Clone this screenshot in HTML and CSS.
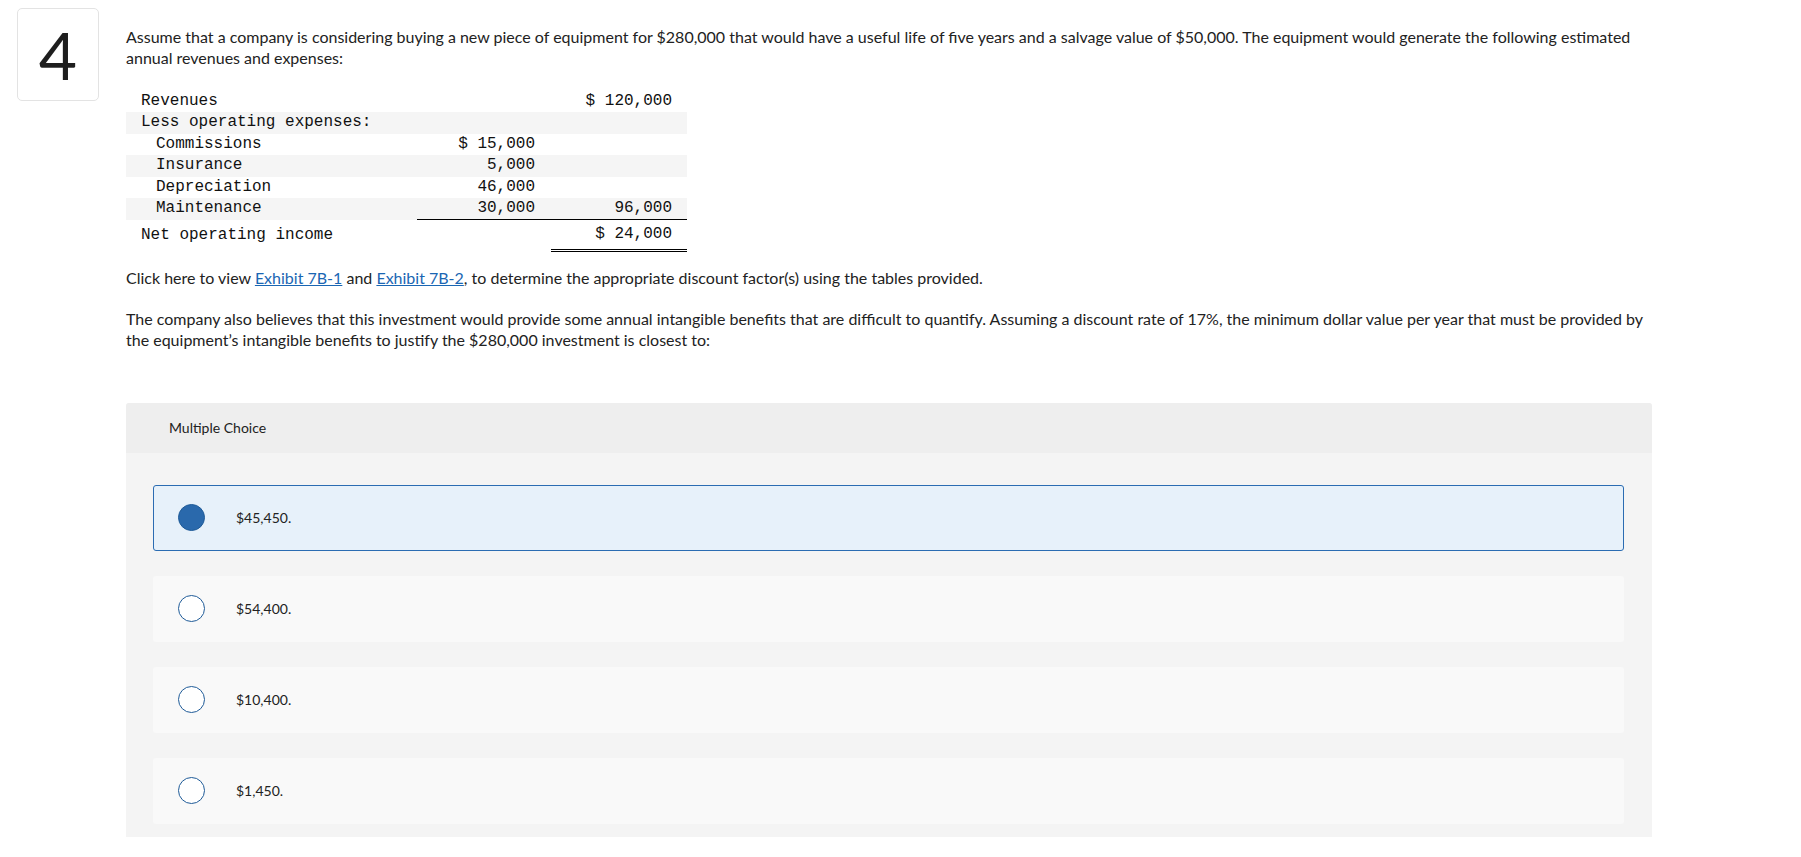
FILE: index.html
```html
<!DOCTYPE html>
<html lang="en">
<head>
<meta charset="utf-8">
<title>Question 4</title>
<link rel="stylesheet" href="styles.css">
</head>
<body>
<div class="question">
  <div class="qnum">4</div>
  <div class="qbody">
    <p class="para first">Assume that a company is considering buying a new piece of equipment for $280,000 that would have a useful life of five years and a salvage value of $50,000. The equipment would generate the following estimated annual revenues and expenses:</p>
    <table class="fin">
      <colgroup><col class="c1"><col class="c2"><col class="c3"></colgroup>
      <tr><td>Revenues</td><td></td><td class="num">$ 120,000</td></tr>
      <tr class="alt"><td>Less operating expenses:</td><td></td><td></td></tr>
      <tr><td class="ind">Commissions</td><td class="num n2">$ 15,000</td><td></td></tr>
      <tr class="alt"><td class="ind">Insurance</td><td class="num n2">5,000</td><td></td></tr>
      <tr><td class="ind">Depreciation</td><td class="num n2">46,000</td><td></td></tr>
      <tr class="alt"><td class="ind">Maintenance</td><td class="num n2 single">30,000</td><td class="num single">96,000</td></tr>
      <tr class="total"><td>Net operating income</td><td></td><td class="num dbl">$ 24,000</td></tr>
    </table>
    <p class="para click">Click here to view <a href="#">Exhibit 7B-1</a> and <a href="#">Exhibit 7B-2</a>, to determine the appropriate discount factor(s) using the tables provided.</p>
    <p class="para">The company also believes that this investment would provide some annual intangible benefits that are difficult to quantify. Assuming a discount rate of 17%, the minimum dollar value per year that must be provided by the equipment’s intangible benefits to justify the $280,000 investment is closest to:</p>
    <div class="mc">
      <div class="mc-head">Multiple Choice</div>
      <div class="mc-list">
        <div class="opt selected"><span class="radio"></span><span class="otext">$45,450.</span></div>
        <div class="opt"><span class="radio"></span><span class="otext">$54,400.</span></div>
        <div class="opt"><span class="radio"></span><span class="otext">$10,400.</span></div>
        <div class="opt"><span class="radio"></span><span class="otext">$1,450.</span></div>
      </div>
    </div>
  </div>
</div>
</body>
</html>
```

FILE: styles.css
```css
html, body {
  margin: 0;
  padding: 0;
  background: #ffffff;
}
body {
  font-family: Lato, "Open Sans", sans-serif;
  color: #222222;
}
.question {
  display: flex;
  align-items: flex-start;
  padding: 8px 0 0 17px;
}
.qnum {
  width: 80px;
  height: 91px;
  border: 1px solid #e3e3e3;
  border-radius: 5px;
  display: flex;
  align-items: center;
  justify-content: center;
  font-family: Lato, sans-serif;
  font-size: 66px;
  line-height: 1;
  color: #1e1e1e;
  flex: none;
}
.qbody {
  margin-left: 27px;
  width: 1526px;
}
.para {
  margin: 0;
  font-size: 16px;
  line-height: 21px;
}
.para.first {
  margin-top: 18px;
}
.fin {
  border-collapse: collapse;
  border-spacing: 0;
  width: 561px;
  margin-top: 23px;
  font-family: "Liberation Mono", monospace;
  font-size: 16px;
  color: #111;
}
.fin col.c1 { width: 291px; }
.fin col.c2 { width: 134px; }
.fin col.c3 { width: 136px; }
.fin td {
  padding: 0 0 0 15px;
  line-height: 21.4px;
  white-space: nowrap;
}
.fin td.ind { padding-left: 30px; }
.fin td.num { text-align: right; padding-right: 15px; padding-left: 0; }
.fin td.n2 { padding-right: 16px; }
.fin tr.alt td { background: #f5f5f5; }
.fin td.single { border-bottom: 1px solid #000; }
.fin tr.total td { padding-top: 4px; padding-bottom: 3px; }
.fin td.dbl { border-bottom: 3px double #000; }
.para.click {
  margin-top: 15px;
}
.click + .para {
  margin-top: 20px;
}
a {
  color: #1a66b3;
  text-decoration: underline;
}
.mc {
  margin-top: 53px;
  background: #f4f4f4;
  border-radius: 3px 3px 0 0;
  padding-bottom: 13px;
}
.mc-head {
  height: 50px;
  background: #eeeeee;
  border-radius: 3px 3px 0 0;
  display: flex;
  align-items: center;
  padding-left: 43px;
  font-size: 14px;
  color: #222;
}
.mc-list {
  display: flex;
  flex-direction: column;
  gap: 25px;
  padding: 32px 28px 0 27px;
}
.opt {
  height: 64px;
  border: 1px solid transparent;
  border-radius: 3px;
  background: #f9f9f9;
  display: flex;
  align-items: center;
  padding-left: 24px;
}
.opt.selected {
  background: #e7f1fa;
  border-color: #2b6cb2;
}
.radio {
  width: 25px;
  height: 25px;
  border-radius: 50%;
  border: 1.5px solid #1f5b98;
  background: #ffffff;
  flex: none;
}
.opt.selected .radio {
  background: #2a69ac;
  border-color: #1f5b98;
}
.otext {
  margin-left: 31px;
  font-size: 14px;
  color: #222;
}
```
